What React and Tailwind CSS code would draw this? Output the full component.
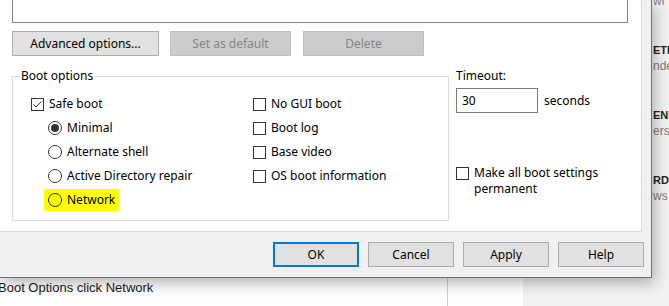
import React from "react";

function CheckBox({ checked = false }) {
    return (
        <span className="w-[13px] h-[13px] border border-[#333333] bg-white flex items-center justify-center shrink-0">
            {checked && (
                <svg width="11" height="11" viewBox="0 0 11 11">
                    <polyline
                        points="1.5,5.5 4,8 9.5,2.5"
                        fill="none"
                        stroke="#333333"
                        strokeWidth="1"
                    />
                </svg>
            )}
        </span>
    );
}

function Radio({ checked = false }) {
    return (
        <span className="w-[14px] h-[14px] rounded-full border border-[#333333] flex items-center justify-center shrink-0">
            {checked && <span className="w-[8px] h-[8px] rounded-full bg-[#333333]" />}
        </span>
    );
}

function Btn({ children, width, disabled = false, primary = false }) {
    let cls = "bg-[#e1e1e1] border border-[#adadad] text-black";
    if (disabled) cls = "bg-[#cccccc] border border-[#bfbfbf] text-[#838383]";
    if (primary) cls = "bg-[#e1e1e1] border-2 border-[#0078d7] text-black";
    return (
        <div className={`${width} h-[25px] flex items-center justify-center ${cls}`}>
            {children}
        </div>
    );
}

const checkRows = [
    { label: "No GUI boot" },
    { label: "Boot log" },
    { label: "Base video" },
    { label: "OS boot information" },
];

const sideItems = [
    { title: "", sub: "wi" },
    { title: "ETE", sub: "nder" },
    { title: "ENN", sub: "erst" },
    { title: "RDE", sub: "ws 1" },
];

export default function App() {
    return (
        <div className="relative w-[669px] h-[306px] overflow-hidden bg-white">
            {/* --- page behind the dialog --- */}
            <div className="flex h-full font-['Liberation_Sans',Arial,sans-serif]">
                <div className="w-[448px] border-r border-[#cfcfcf] flex flex-col justify-end">
                    <div className="h-[29px] pt-[3px] -ml-[2px] text-[13px] leading-[15px] text-[#1a1a1a] whitespace-nowrap">
                        Boot Options click Network
                    </div>
                </div>
                <div className="w-[75px]" />
                <div className="flex-1 bg-[#f2f2f2] overflow-hidden">
                    <div className="-mt-[22px] flex flex-col">
                        {sideItems.map((it, i) => (
                            <div key={i} className="h-[65px] pl-[130px] whitespace-nowrap">
                                <div className="h-[15px] flex items-center text-[11px] font-bold text-[#222222]">
                                    {it.title}
                                </div>
                                <div className="h-[15px] flex items-center text-[12px] text-[#7a7a7a]">
                                    {it.sub}
                                </div>
                            </div>
                        ))}
                    </div>
                </div>
            </div>

            {/* --- System Configuration dialog (Boot tab) --- */}
            <div className="absolute left-0 top-0 w-[652px] h-[278px] bg-[#f0f0f0] border-r border-b border-[#707070] shadow-[2px_5px_14px_rgba(0,0,0,0.3)] flex flex-col font-['Noto_Sans',sans-serif] text-[12px] text-black">
                <div className="w-[642px] h-[232px] bg-white border-r border-b border-[#dadada] flex flex-col">
                    {/* OS list */}
                    <div className="ml-[12px] w-[616px] h-[23px] border-x border-b border-[#828282]" />

                    {/* list buttons */}
                    <div className="mt-[8px] ml-[12px] flex">
                        <Btn width="w-[147px]">Advanced options...</Btn>
                        <div className="ml-[11px]">
                            <Btn width="w-[121px]" disabled>Set as default</Btn>
                        </div>
                        <div className="ml-[12px]">
                            <Btn width="w-[121px]" disabled>Delete</Btn>
                        </div>
                    </div>

                    <div className="mt-[12px] flex">
                        {/* Boot options group */}
                        <fieldset className="ml-[12px] w-[437px] h-[153px] border border-[#dcdcdc]">
                            <legend className="ml-[7px] px-[1px] h-[16px] leading-[16px]">Boot options</legend>
                            <div className="pt-[8px] pl-[18px] flex">
                                <div className="w-[222px] flex flex-col">
                                    <div className="h-[24px] flex items-center gap-[5px]">
                                        <CheckBox checked />
                                        <span>Safe boot</span>
                                    </div>
                                    <div className="pl-[17px] flex flex-col">
                                        {["Minimal", "Alternate shell", "Active Directory repair"].map(
                                            (label, i) => (
                                                <div key={label} className="h-[24px] flex items-center gap-[5px]">
                                                    <Radio checked={i === 0} />
                                                    <span>{label}</span>
                                                </div>
                                            )
                                        )}
                                        <div className="h-[24px] flex items-center">
                                            <div className="-ml-[4px] h-[22px] pl-[4px] pr-[4px] bg-[#ffff00] flex items-center gap-[5px]">
                                                <Radio />
                                                <span>Network</span>
                                            </div>
                                        </div>
                                    </div>
                                </div>
                                <div className="flex flex-col">
                                    {checkRows.map((r) => (
                                        <div key={r.label} className="h-[24px] flex items-center gap-[5px]">
                                            <CheckBox />
                                            <span>{r.label}</span>
                                        </div>
                                    ))}
                                </div>
                            </div>
                        </fieldset>

                        {/* Timeout column */}
                        <div className="ml-[7px] flex flex-col">
                            <div className="h-[16px] leading-[16px]">Timeout:</div>
                            <div className="mt-[4px] flex items-center">
                                <div className="w-[82px] h-[25px] border border-[#7a7a7a] pl-[5px] flex items-center">
                                    30
                                </div>
                                <span className="ml-[6px]">seconds</span>
                            </div>
                            <div className="mt-[52px] flex items-start gap-[5px]">
                                <div className="mt-[2px]">
                                    <CheckBox />
                                </div>
                                <span className="w-[140px] leading-[16px]">
                                    Make all boot settings permanent
                                </span>
                            </div>
                        </div>
                    </div>
                </div>

                {/* dialog buttons */}
                <div className="pt-[10px] pr-[7px] flex justify-end gap-[9px]">
                    <Btn width="w-[86px]" primary>OK</Btn>
                    <Btn width="w-[86px]">Cancel</Btn>
                    <Btn width="w-[86px]">Apply</Btn>
                    <Btn width="w-[86px]">Help</Btn>
                </div>
            </div>
        </div>
    );
}
